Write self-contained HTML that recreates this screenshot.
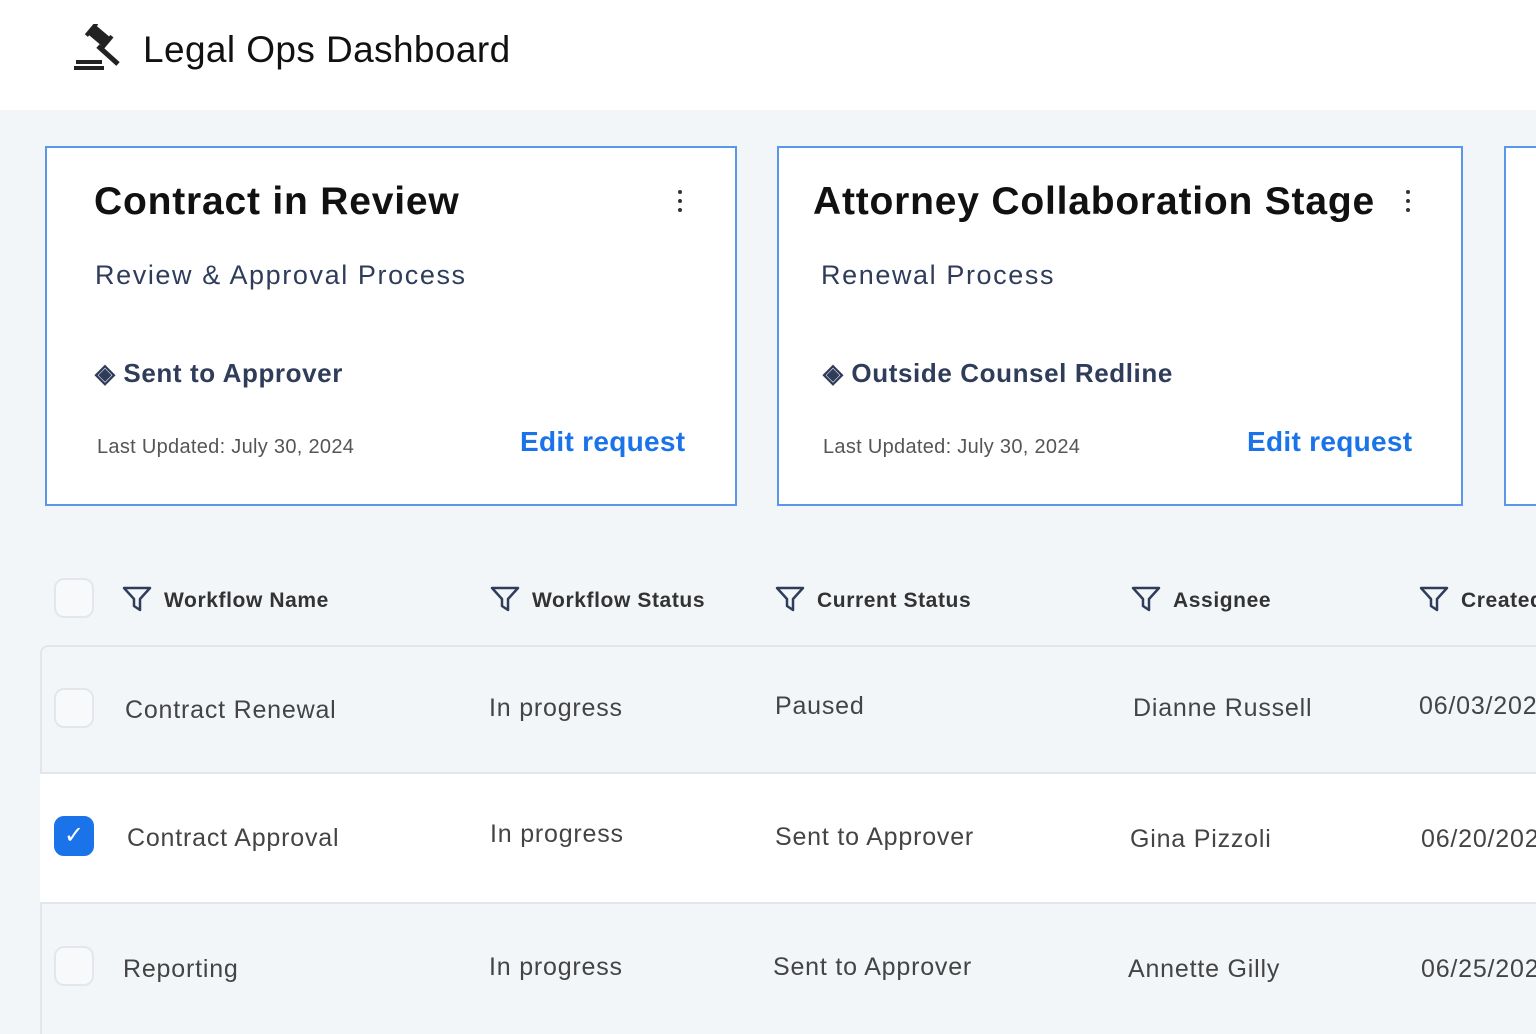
<!DOCTYPE html>
<html><head><style>
body{margin:0;width:1536px;height:1023px;overflow:hidden;background:#f3f6f9;font-family:"Liberation Sans",sans-serif;position:relative}
div{white-space:nowrap}
.top{position:absolute;left:0;top:0;width:1536px;height:110px;background:#fff}
.title{position:absolute;left:143px;top:29px;font-size:37px;color:#111;letter-spacing:0.4px}
.card{position:absolute;top:146px;height:360px;background:#fff;border:2px solid #5b97e8;box-sizing:border-box}
.ct{position:absolute;top:32px;font-size:39px;font-weight:bold;color:#111;letter-spacing:0.8px}
.cs{position:absolute;top:112px;font-size:27px;color:#2f3c5a;letter-spacing:1.6px}
.st{position:absolute;top:210px;font-size:26px;color:#2f3c5a;font-weight:bold;letter-spacing:0.6px}
.lu{position:absolute;top:288px;font-size:20px;color:#555;letter-spacing:0.3px}
.ed{position:absolute;top:278px;font-size:28px;color:#1a73e8;font-weight:bold;letter-spacing:0.3px}
.dots{position:absolute;top:42px;width:4px}
.dots i{display:block;width:4px;height:4px;border-radius:2px;background:#333;margin-bottom:5px}
.h{position:absolute;top:586px;font-size:21px;font-weight:bold;color:#333;letter-spacing:0.6px}
.h svg{vertical-align:-5px;margin-right:12px}
.t{position:absolute;font-size:25px;color:#444;letter-spacing:0.8px}
.cb{position:absolute;left:54px;width:40px;height:40px;border:2px solid #e3e6ea;border-radius:10px;box-sizing:border-box;background:#f7f9fb}
.row{position:absolute;left:40px;width:1500px;border-top:2px solid #e2e6ea}
</style></head><body>
<div class="top"></div>
<svg style="position:absolute;left:72px;top:24px" width="50" height="48" viewBox="0 0 50 48"><g transform="rotate(40 22 18)"><rect x="12" y="4" width="20" height="12" fill="#222"/><rect x="10" y="2" width="4" height="16" fill="#222"/><rect x="30" y="2" width="4" height="16" fill="#222"/></g><line x1="26" y1="22" x2="46" y2="40" stroke="#222" stroke-width="5"/><rect x="4" y="36" width="26" height="4" fill="#222"/><rect x="2" y="42" width="30" height="4" fill="#222"/></svg>
<div class="title">Legal Ops Dashboard</div>
<div class="card" style="left:45px;width:692px">
<div class="ct" style="left:47px">Contract in Review</div><div class="dots" style="left:631px"><i></i><i></i><i></i></div>
<div class="cs" style="left:48px">Review &amp; Approval Process</div>
<div class="st" style="left:48px">◈ Sent to Approver</div>
<div class="lu" style="left:50px">Last Updated: July 30, 2024</div>
<div class="ed" style="left:473px">Edit request</div></div>
<div class="card" style="left:777px;width:686px">
<div class="ct" style="left:34px">Attorney Collaboration Stage</div><div class="dots" style="left:627px"><i></i><i></i><i></i></div>
<div class="cs" style="left:42px">Renewal Process</div>
<div class="st" style="left:44px">◈ Outside Counsel Redline</div>
<div class="lu" style="left:44px">Last Updated: July 30, 2024</div>
<div class="ed" style="left:468px">Edit request</div></div>
<div class="card" style="left:1504px;width:60px"></div>
<div class="cb" style="top:578px"></div>
<div class="h" style="left:122px"><svg width="30" height="26" viewBox="0 0 30 26"><path d="M2 2H28L18 13V24L12 20V13Z" fill="none" stroke="#2f3c5a" stroke-width="2.5" stroke-linejoin="round"/></svg>Workflow Name</div>
<div class="h" style="left:490px"><svg width="30" height="26" viewBox="0 0 30 26"><path d="M2 2H28L18 13V24L12 20V13Z" fill="none" stroke="#2f3c5a" stroke-width="2.5" stroke-linejoin="round"/></svg>Workflow Status</div>
<div class="h" style="left:775px"><svg width="30" height="26" viewBox="0 0 30 26"><path d="M2 2H28L18 13V24L12 20V13Z" fill="none" stroke="#2f3c5a" stroke-width="2.5" stroke-linejoin="round"/></svg>Current Status</div>
<div class="h" style="left:1131px"><svg width="30" height="26" viewBox="0 0 30 26"><path d="M2 2H28L18 13V24L12 20V13Z" fill="none" stroke="#2f3c5a" stroke-width="2.5" stroke-linejoin="round"/></svg>Assignee</div>
<div class="h" style="left:1419px"><svg width="30" height="26" viewBox="0 0 30 26"><path d="M2 2H28L18 13V24L12 20V13Z" fill="none" stroke="#2f3c5a" stroke-width="2.5" stroke-linejoin="round"/></svg>Created</div>
<div class="row" style="top:645px;height:127px;border-left:2px solid #e2e6ea;border-radius:8px 0 0 0"></div>
<div class="row" style="top:772px;height:130px;background:#fff"></div>
<div class="row" style="top:902px;height:130px;border-left:2px solid #e2e6ea"></div>
<div class="cb" style="top:688px"></div>
<div class="cb" style="top:816px;background:#1a73e8;border-color:#1a73e8;color:#fff;font-size:24px;text-align:center;line-height:36px">✓</div>
<div class="cb" style="top:946px"></div>
<div class="t" style="left:125px;top:696px">Contract Renewal</div><div class="t" style="left:489px;top:694px">In progress</div><div class="t" style="left:775px;top:692px">Paused</div><div class="t" style="left:1133px;top:694px">Dianne Russell</div><div class="t" style="left:1419px;top:692px">06/03/2024</div>
<div class="t" style="left:127px;top:824px">Contract Approval</div><div class="t" style="left:490px;top:820px">In progress</div><div class="t" style="left:775px;top:823px">Sent to Approver</div><div class="t" style="left:1130px;top:825px">Gina Pizzoli</div><div class="t" style="left:1421px;top:825px">06/20/2024</div>
<div class="t" style="left:123px;top:955px">Reporting</div><div class="t" style="left:489px;top:953px">In progress</div><div class="t" style="left:773px;top:953px">Sent to Approver</div><div class="t" style="left:1128px;top:955px">Annette Gilly</div><div class="t" style="left:1421px;top:955px">06/25/2024</div>
</body></html>
